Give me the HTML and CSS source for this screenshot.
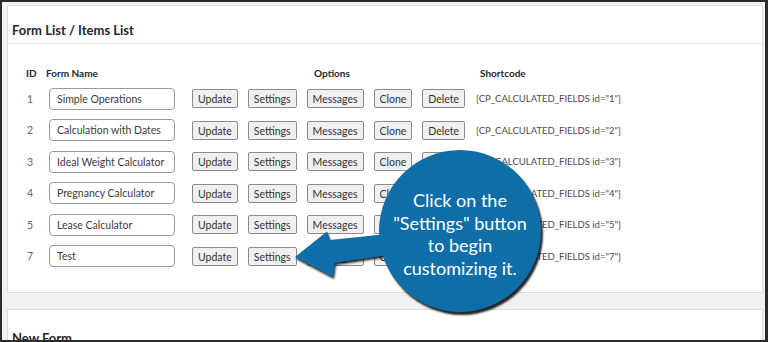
FILE: index.html
```html
<!DOCTYPE html>
<html>
<head>
<meta charset="utf-8">
<link rel="stylesheet" href="styles.css">
</head>
<body>
<div class="frame">
  <section class="panel panel-list">
    <div class="panel-head"><h3 class="panel-title">Form List / Items List</h3></div>
    <div class="panel-body">
      <div class="table">
        <div class="th th-id">ID</div>
        <div class="th th-name">Form Name</div>
        <div class="th th-opt">Options</div>
        <div class="th th-code">Shortcode</div>

        <div class="td td-id">1</div>
        <div class="td td-name"><input class="name-input" type="text" value="Simple Operations"></div>
        <div class="td td-opt"><button class="btn">Update</button><button class="btn">Settings</button><button class="btn">Messages</button><button class="btn">Clone</button><button class="btn">Delete</button></div>
        <div class="td td-code">[CP_CALCULATED_FIELDS id="1"]</div>

        <div class="td td-id">2</div>
        <div class="td td-name"><input class="name-input" type="text" value="Calculation with Dates"></div>
        <div class="td td-opt"><button class="btn">Update</button><button class="btn">Settings</button><button class="btn">Messages</button><button class="btn">Clone</button><button class="btn">Delete</button></div>
        <div class="td td-code">[CP_CALCULATED_FIELDS id="2"]</div>

        <div class="td td-id">3</div>
        <div class="td td-name"><input class="name-input" type="text" value="Ideal Weight Calculator"></div>
        <div class="td td-opt"><button class="btn">Update</button><button class="btn">Settings</button><button class="btn">Messages</button><button class="btn">Clone</button><button class="btn">Delete</button></div>
        <div class="td td-code">[CP_CALCULATED_FIELDS id="3"]</div>

        <div class="td td-id">4</div>
        <div class="td td-name"><input class="name-input" type="text" value="Pregnancy Calculator"></div>
        <div class="td td-opt"><button class="btn">Update</button><button class="btn">Settings</button><button class="btn">Messages</button><button class="btn">Clone</button><button class="btn">Delete</button></div>
        <div class="td td-code">[CP_CALCULATED_FIELDS id="4"]</div>

        <div class="td td-id">5</div>
        <div class="td td-name"><input class="name-input" type="text" value="Lease Calculator"></div>
        <div class="td td-opt"><button class="btn">Update</button><button class="btn">Settings</button><button class="btn">Messages</button><button class="btn">Clone</button><button class="btn">Delete</button></div>
        <div class="td td-code">[CP_CALCULATED_FIELDS id="5"]</div>

        <div class="td td-id">7</div>
        <div class="td td-name"><input class="name-input" type="text" value="Test"></div>
        <div class="td td-opt"><button class="btn">Update</button><button class="btn">Settings</button><button class="btn">Messages</button><button class="btn">Clone</button><button class="btn">Delete</button></div>
        <div class="td td-code">[CP_CALCULATED_FIELDS id="7"]</div>
      </div>
    </div>
  </section>
  <section class="panel panel-new">
    <div class="panel-head"><h3 class="panel-title">New Form</h3></div>
  </section>

  <div class="callout">
    <svg class="arrow" width="120" height="70" viewBox="0 0 120 70">
      <polygon points="10,37 42,11.5 45,20 112,13 110,34 50,43 48,57" fill="#0f6ea8"/>
    </svg>
    <div class="bubble">
      <p class="bubble-text">Click on the<br>"Settings" button<br>to begin<br>customizing it.</p>
    </div>
  </div>
</div>
</body>
</html>
```

FILE: styles.css
```css
* { box-sizing: border-box; }
html, body { margin: 0; padding: 0; }
body {
  font-family: "Lato", "Open Sans", sans-serif;
  background: #fff;
}
.frame {
  position: relative;
  width: 768px;
  height: 342px;
  border-style: solid;
  border-color: #2b2b2b;
  border-width: 2px 3px 2px 2px;
  background: #f1f1f1;
  padding: 3px 2px 0 5px;
  overflow: hidden;
  display: flex;
  flex-direction: column;
  gap: 16px;
}
.panel {
  background: #fff;
  border: 1px solid #dcdcdc;
  flex: none;
}
.panel-head {
  height: 38px;
  border-bottom: 1px solid #e6e6e6;
  padding: 0 0 4px 4px;
  display: flex;
  align-items: flex-end;
}
.panel-new .panel-head { border-bottom: none; height: 60px; align-items: flex-start; padding-top: 19px; }
.panel-title {
  margin: 0;
  font-size: 13px;
  font-weight: 700;
  line-height: 18px;
  color: #23282d;
}
.panel-body {
  padding: 18px 0 20px 18px;
}
.table {
  display: grid;
  grid-template-columns: 20px 142px 288px 1fr;
  grid-template-rows: 21px repeat(6, 31.5px);
  align-items: center;
}
.th {
  font-size: 10px;
  font-weight: 700;
  color: #23282d;
}
.th-opt { text-align: center; }
.th-code { padding-left: 4px; }
.td { font-size: 10.5px; color: #444; }
.td-id { color: #666; padding-left: 1px; }
.name-input {
  display: block;
  margin-left: 3px;
  width: 126px;
  height: 22px;
  border: 1px solid #9a9a9a;
  border-radius: 4px;
  padding: 0 7px;
  font-family: inherit;
  font-size: 10.5px;
  color: #3c3c3c;
  background: #fff;
}
.td-opt {
  display: flex;
  gap: 10px;
  padding-left: 4px;
}
.btn {
  height: 19px;
  padding: 0 5px;
  border: 1px solid #8a8a8a;
  border-radius: 2px;
  background: #f0f0f0;
  font-family: inherit;
  font-size: 10.5px;
  line-height: 18px;
  color: #333;
}
.td-code { color: #4a4a4a; font-size: 9.5px; }
.callout {
  position: absolute;
  left: 0;
  top: 0;
  width: 0;
  height: 0;
}
.arrow {
  position: absolute;
  left: 283px;
  top: 218px;
  filter: drop-shadow(1px 2px 1px rgba(0,0,0,0.85));
}
.bubble {
  position: absolute;
  left: 377px;
  top: 148px;
  width: 162px;
  height: 162px;
  border-radius: 50%;
  background: #0f6ea8;
  box-shadow: 2px 3px 2px rgba(0,0,0,0.85);
  padding-top: 39px;
}
.bubble-text {
  margin: 0;
  font-family: "Lato", sans-serif;
  font-size: 18px;
  line-height: 22.5px;
  color: #fff;
  text-align: center;
}
```
